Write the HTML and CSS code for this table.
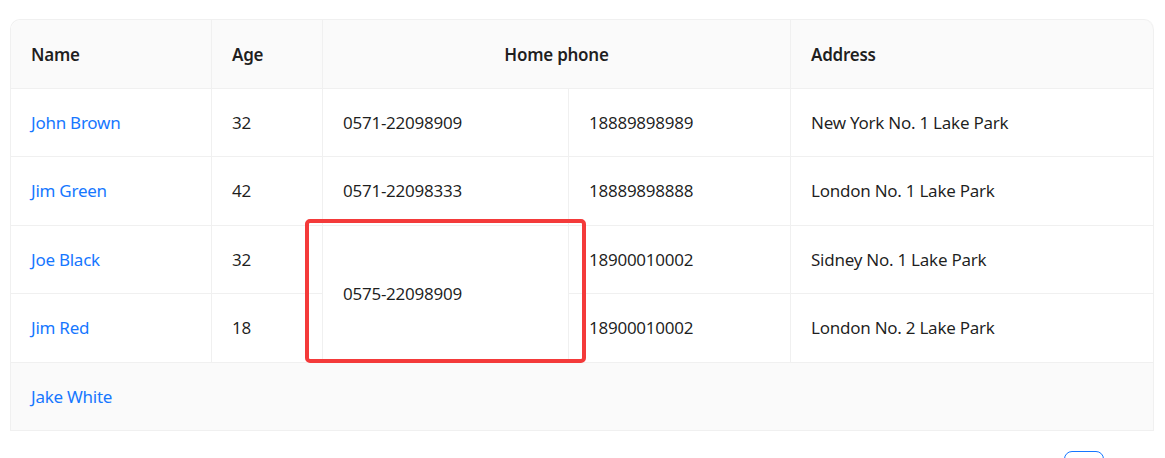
FILE: index.html
```html
<!DOCTYPE html>
<html>
<head>
<meta charset="utf-8">
<link rel="stylesheet" href="styles.css">
</head>
<body>
<div class="page">
  <div class="table-wrap">
    <table class="tbl">
      <colgroup>
        <col class="c-name">
        <col class="c-age">
        <col class="c-tel">
        <col class="c-phone">
        <col class="c-addr">
      </colgroup>
      <thead>
        <tr>
          <th>Name</th>
          <th>Age</th>
          <th colspan="2" class="center">Home phone</th>
          <th>Address</th>
        </tr>
      </thead>
      <tbody>
        <tr>
          <td><a class="link">John Brown</a></td>
          <td>32</td>
          <td>0571-22098909</td>
          <td>18889898989</td>
          <td>New York No. 1 Lake Park</td>
        </tr>
        <tr>
          <td><a class="link">Jim Green</a></td>
          <td>42</td>
          <td>0571-22098333</td>
          <td>18889898888</td>
          <td>London No. 1 Lake Park</td>
        </tr>
        <tr>
          <td><a class="link">Joe Black</a></td>
          <td>32</td>
          <td rowspan="2">0575-22098909</td>
          <td>18900010002</td>
          <td>Sidney No. 1 Lake Park</td>
        </tr>
        <tr>
          <td><a class="link">Jim Red</a></td>
          <td>18</td>
          <td>18900010002</td>
          <td>London No. 2 Lake Park</td>
        </tr>
        <tr class="hover">
          <td colspan="5"><a class="link">Jake White</a></td>
        </tr>
      </tbody>
    </table>
    <div class="highlight"></div>
  </div>
  <div class="pagination">
    <span class="pg-item pg-arrow"><svg width="12" height="12" viewBox="0 0 12 12"><path d="M8 1.5 L3.5 6 L8 10.5" fill="none" stroke="rgba(0,0,0,0.25)" stroke-width="1.5"/></svg></span>
    <span class="pg-item pg-active">1</span>
    <span class="pg-item pg-arrow"><svg width="12" height="12" viewBox="0 0 12 12"><path d="M4 1.5 L8.5 6 L4 10.5" fill="none" stroke="rgba(0,0,0,0.25)" stroke-width="1.5"/></svg></span>
  </div>
</div>
</body>
</html>
```

FILE: styles.css
```css
html, body {
  margin: 0;
  padding: 0;
  background: #fff;
}

.page {
  padding: 19px 11px 0 10px;
  font-family: "Segoe UI", "Noto Sans", "Open Sans", sans-serif;
  font-size: 17px;
  letter-spacing: -0.25px;
  line-height: 27.5px;
  color: rgba(0, 0, 0, 0.88);
}

.table-wrap {
  position: relative;
  border-top: 1px solid #f0f0f0;
  border-left: 1px solid #f0f0f0;
  border-radius: 10px 10px 0 0;
}

.tbl {
  width: 100%;
  table-layout: fixed;
  border-collapse: separate;
  border-spacing: 0;
}

.c-name { width: 201px; }
.c-age { width: 111px; }
.c-tel { width: 246px; }
.c-phone { width: 222px; }
.c-addr { width: auto; }

.tbl th,
.tbl td {
  padding: 20px 20px;
  text-align: left;
  border-right: 1px solid #f0f0f0;
  border-bottom: 1px solid #f0f0f0;
  height: 27.5px;
  white-space: nowrap;
}

.tbl th {
  padding: 21px 20px 19px;
  background: #fafafa;
  font-weight: 600;
}

.tbl th:first-child {
  border-top-left-radius: 10px;
}

.tbl th:last-child {
  border-top-right-radius: 10px;
}

.tbl th.center {
  text-align: center;
}

.tbl tr.hover td {
  background: #fafafa;
}

.link {
  color: #1677ff;
  text-decoration: none;
}

.highlight {
  position: absolute;
  left: 294px;
  top: 199px;
  width: 273px;
  height: 136px;
  border: 4px solid #f43a3a;
  border-radius: 5px;
}

.pagination {
  display: flex;
  justify-content: flex-end;
  gap: 10px;
  margin-top: 20px;
}

.pg-item {
  box-sizing: border-box;
  width: 40px;
  height: 40px;
  display: flex;
  align-items: center;
  justify-content: center;
  border-radius: 8px;
}

.pg-active {
  border: 1.5px solid #1677ff;
  color: #1677ff;
  font-weight: 600;
}
```
